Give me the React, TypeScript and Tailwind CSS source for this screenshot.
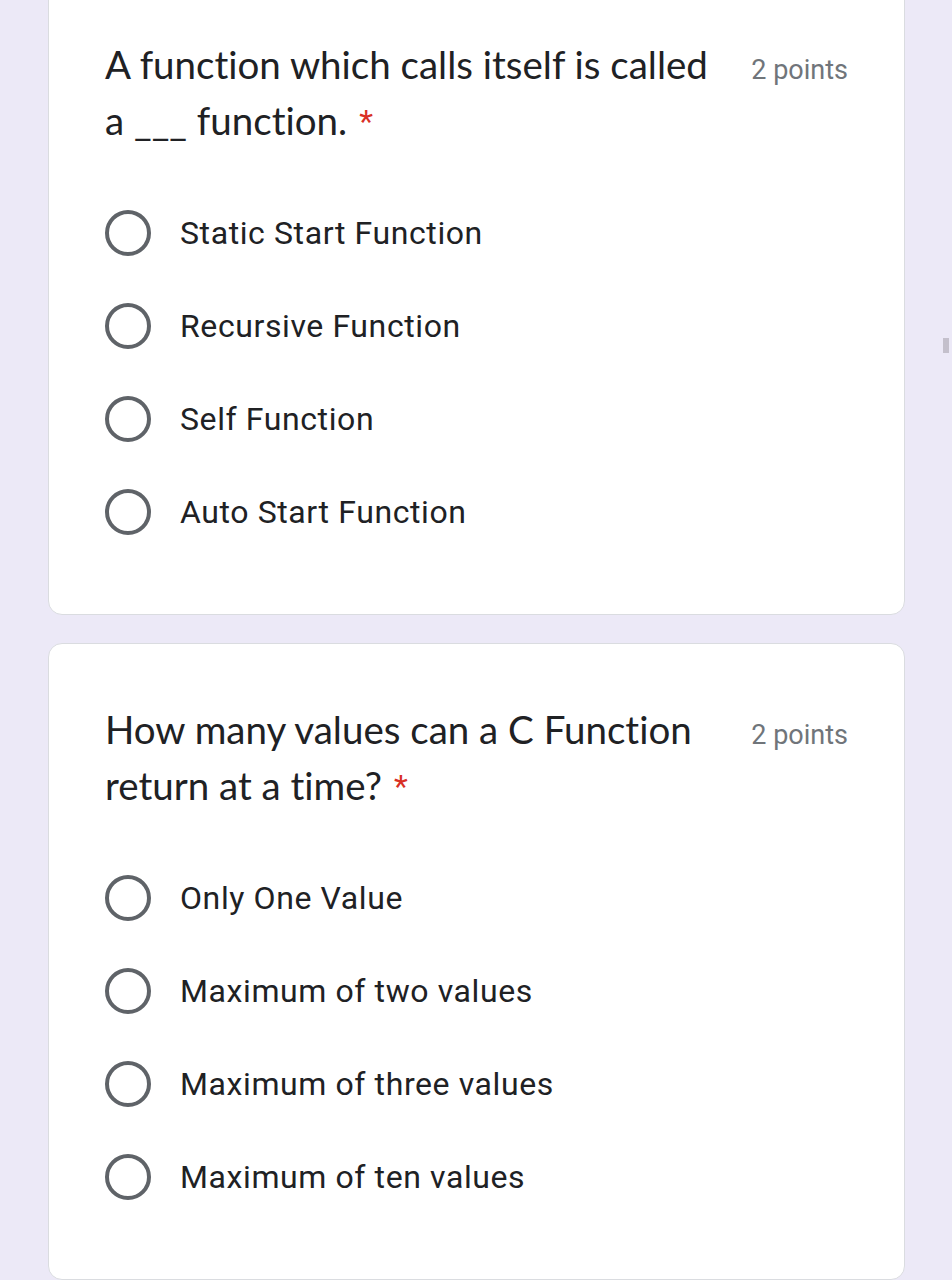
import type { ReactElement } from 'react'

type Question = {
  lines: string[]
  points: string
  options: string[]
}

const questions: Question[] = [
  {
    lines: ['A function which calls itself is called', 'a ___ function.'],
    points: '2 points',
    options: ['Static Start Function', 'Recursive Function', 'Self Function', 'Auto Start Function']
  },
  {
    lines: ['How many values can a C Function', 'return at a time?'],
    points: '2 points',
    options: ['Only One Value', 'Maximum of two values', 'Maximum of three values', 'Maximum of ten values']
  }
]

function QuestionCard({ question }: { question: Question }): ReactElement {
  return (
    <div className="rounded-[14px] border border-[#dadce0] bg-white px-[56px] pb-[56px] pt-[57px]">
      <div className="flex items-baseline">
        <div className="min-w-0 flex-1 font-['Lato',sans-serif] text-[38.5px] leading-[56px] text-[#202124] [font-variant-ligatures:none]">
          {question.lines.map((line, i) => (
            <div key={i}>
              {line}
              {i === question.lines.length - 1 ? (
                <span className="relative -top-[3px] ml-[12px] font-['Roboto',sans-serif] text-[32px] leading-none text-[#d93025]">*</span>
              ) : null}
            </div>
          ))}
        </div>
        <span className="ml-10 shrink-0 font-['Roboto',sans-serif] text-[27px] text-[#70757a]">
          {question.points}
        </span>
      </div>
      <ul className="mt-[38px] flex flex-col">
        {question.options.map((option) => (
          <li key={option} className="flex h-[93px] items-center gap-[29px]">
            <span className="h-[46px] w-[46px] shrink-0 rounded-full border-[4.5px] border-[#5f6368]" />
            <span className="font-['Roboto',sans-serif] text-[32px] tracking-[0.6px] text-[#202124]">{option}</span>
          </li>
        ))}
      </ul>
    </div>
  )
}

export default function App(): ReactElement {
  return (
    <div className="relative h-[1280px] overflow-hidden bg-[#ece9f7]">
      <div className="-mt-[22px] flex flex-col gap-[28px] pl-[48px] pr-[47px]">
        {questions.map((q, i) => (
          <QuestionCard key={i} question={q} />
        ))}
      </div>
      <div className="absolute right-[3px] top-[338px] h-[15px] w-[6px] bg-[#c4c0cc]" />
    </div>
  )
}
